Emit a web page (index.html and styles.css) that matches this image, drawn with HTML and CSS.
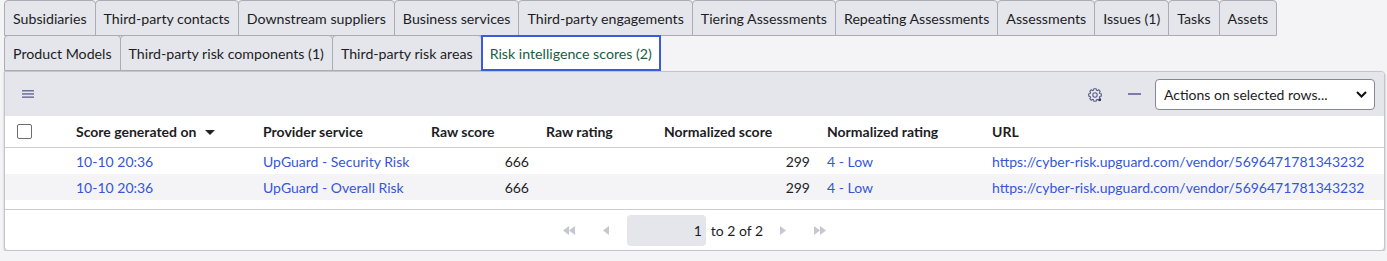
FILE: index.html
```html
<!DOCTYPE html>
<html>
<head>
<meta charset="utf-8">
<link rel="stylesheet" href="styles.css">
</head>
<body>
<div class="page">
  <div class="tabrow">
    <div class="tab">Subsidiaries</div>
    <div class="tab">Third-party contacts</div>
    <div class="tab">Downstream suppliers</div>
    <div class="tab">Business services</div>
    <div class="tab">Third-party engagements</div>
    <div class="tab">Tiering Assessments</div>
    <div class="tab">Repeating Assessments</div>
    <div class="tab">Assessments</div>
    <div class="tab">Issues (1)</div>
    <div class="tab">Tasks</div>
    <div class="tab">Assets</div>
  </div>
  <div class="tabrow">
    <div class="tab">Product Models</div>
    <div class="tab">Third-party risk components (1)</div>
    <div class="tab">Third-party risk areas</div>
    <div class="tab active">Risk intelligence scores (2)</div>
  </div>
  <div class="panel">
    <div class="toolbar">
      <svg class="hamb" width="12" height="8" viewBox="0 0 12 8"><rect x="0" y="0" width="12" height="1.5" fill="#6f7096"/><rect x="0" y="3.2" width="12" height="1.5" fill="#6f7096"/><rect x="0" y="6.4" width="12" height="1.5" fill="#6f7096"/></svg>
      <div class="spacer"></div>
      <svg class="gear" width="16" height="16" viewBox="0 0 16 16">
        <path d="M12.78 6.54 L14.30 6.89 L14.30 9.11 L12.78 9.46 L12.41 10.35 L13.24 11.67 L11.67 13.24 L10.35 12.41 L9.46 12.78 L9.11 14.30 L6.89 14.30 L6.54 12.78 L5.65 12.41 L4.33 13.24 L2.76 11.67 L3.59 10.35 L3.22 9.46 L1.70 9.11 L1.70 6.89 L3.22 6.54 L3.59 5.65 L2.76 4.33 L4.33 2.76 L5.65 3.59 L6.54 3.22 L6.89 1.70 L9.11 1.70 L9.46 3.22 L10.35 3.59 L11.67 2.76 L13.24 4.33 L12.41 5.65 Z" fill="none" stroke="#5d6088" stroke-width="1.1" stroke-linejoin="round"/>
        <circle cx="8" cy="8" r="2.2" fill="none" stroke="#5d6088" stroke-width="1.1"/>
        <circle cx="12.8" cy="12.8" r="1.4" fill="#2f3360"/>
      </svg>
      <span class="minus"></span>
      <div class="select"><span>Actions on selected rows...</span>
        <svg width="11" height="7" viewBox="0 0 11 7"><path d="M1 1 L5.5 5.5 L10 1" fill="none" stroke="#111" stroke-width="2"/></svg>
      </div>
    </div>
    <table class="grid">
      <colgroup>
        <col style="width:59px"><col style="width:187px"><col style="width:168px"><col style="width:115px"><col style="width:118px"><col style="width:163px"><col style="width:165px"><col>
      </colgroup>
      <thead>
        <tr>
          <th class="cb"><span class="checkbox"></span></th>
          <th>Score generated on <svg class="caret" width="10" height="5" viewBox="0 0 10 5"><path d="M0 0 H10 L5 5 Z" fill="#222"/></svg></th>
          <th>Provider service</th>
          <th>Raw score</th>
          <th>Raw rating</th>
          <th>Normalized score</th>
          <th>Normalized rating</th>
          <th>URL</th>
        </tr>
      </thead>
      <tbody>
        <tr>
          <td></td>
          <td><a>10-10 20:36</a></td>
          <td><a>UpGuard - Security Risk</a></td>
          <td class="num">666</td>
          <td></td>
          <td class="num">299</td>
          <td><a>4 - Low</a></td>
          <td><a>https://cyber-risk.upguard.com/vendor/5696471781343232</a></td>
        </tr>
        <tr class="alt">
          <td></td>
          <td><a>10-10 20:36</a></td>
          <td><a>UpGuard - Overall Risk</a></td>
          <td class="num">666</td>
          <td></td>
          <td class="num">299</td>
          <td><a>4 - Low</a></td>
          <td><a>https://cyber-risk.upguard.com/vendor/5696471781343232</a></td>
        </tr>
      </tbody>
    </table>
    <div class="gap"></div>
    <div class="pager">
      <svg class="pg first" width="12" height="9" viewBox="0 0 12 9"><path d="M6 0 V9 L0 4.5 Z M12 0 V9 L6 4.5 Z" fill="#c6c7d3"/></svg>
      <svg class="pg prev" width="6" height="9" viewBox="0 0 6 9"><path d="M6 0 V9 L0 4.5 Z" fill="#c6c7d3"/></svg>
      <div class="pageinput">1</div>
      <span class="of">to 2 of 2</span>
      <svg class="pg next" width="6" height="9" viewBox="0 0 6 9"><path d="M0 0 V9 L6 4.5 Z" fill="#c6c7d3"/></svg>
      <svg class="pg last" width="12" height="9" viewBox="0 0 12 9"><path d="M0 0 V9 L6 4.5 Z M6 0 V9 L12 4.5 Z" fill="#c6c7d3"/></svg>
    </div>
  </div>
</div>
</body>
</html>
```

FILE: styles.css
```css
html, body {
  margin: 0;
  padding: 0;
  background: #f4f4f6;
  font-family: Lato, "Liberation Sans", sans-serif;
  font-size: 14px;
  color: #1d1d1f;
}
.page {
  padding: 0 2px 0 4px;
}
.tabrow {
  display: flex;
  height: 35px;
}
.tabrow + .tabrow { height: 36px; }
.tab {
  box-sizing: border-box;
  height: 36px;
  padding: 0 8px;
  display: flex;
  align-items: center;
  background: #e4e6eb;
  border: 1px solid #a9acb4;
  border-radius: 4px 4px 0 0;
  margin-right: -1px;
  white-space: nowrap;
  color: #1d1d1f;
  font-size: 14.2px;
}
.tab.active {
  background: #fff;
  border: 2px solid #3a5bdb;
  border-radius: 0;
  color: #17603f;
  padding: 0 7px;
  position: relative;
  z-index: 1;
}
.panel {
  background: #fff;
  border: 1px solid #c3c5cc;
  border-radius: 0 4px 4px 4px;
  box-shadow: 0 1px 2px rgba(0,0,0,0.25);
  overflow: hidden;
}
.toolbar {
  height: 44px;
  background: #e4e6eb;
  display: flex;
  align-items: center;
  padding: 0 9px 0 17px;
}
.spacer { flex: 1; }
.gear { margin-right: 25px; margin-top: 1px; }
.minus {
  width: 13px;
  height: 1.5px;
  background: #7b7ea4;
  margin-right: 14px;
}
.select {
  box-sizing: border-box;
  width: 220px;
  height: 31px;
  background: #fff;
  border: 1px solid #85888f;
  border-radius: 4px;
  display: flex;
  align-items: center;
  justify-content: space-between;
  padding: 0 7px 0 8px;
  font-size: 14px;
}
.grid {
  width: 100%;
  border-collapse: collapse;
  table-layout: fixed;
}
.grid th {
  height: 31px;
  text-align: left;
  font-weight: 700;
  padding: 0 5px 0 12px;
  border-bottom: 1px solid #cbcdd3;
  white-space: nowrap;
  vertical-align: middle;
}
.grid th.cb { padding: 0 0 0 12px; }
.checkbox {
  display: block;
  width: 13px;
  height: 13px;
  border: 1px solid #6a6d75;
  border-radius: 2px;
  background: #fff;
}
.caret { margin-left: 5px; vertical-align: middle; position: relative; top: -1px; }
.grid td {
  height: 26px;
  padding: 0 5px 0 12px;
  white-space: nowrap;
  vertical-align: middle;
}
.grid tr.alt td { background: #f4f4f6; }
.grid td.num { text-align: right; }
.grid a { color: #3556d8; text-decoration: none; }
.gap {
  height: 9px;
  border-bottom: 1px solid #cbcdd3;
}
.pager {
  height: 40px;
  display: flex;
  align-items: center;
  justify-content: center;
}
.pg.first { margin-right: 28px; }
.pg.prev { margin-right: 18px; }
.pageinput {
  box-sizing: border-box;
  width: 79px;
  height: 31px;
  background: #e4e6eb;
  border-radius: 4px;
  display: flex;
  align-items: center;
  justify-content: flex-end;
  padding-right: 4px;
  margin-right: 5px;
}
.of { margin-right: 17px; }
.pg.next { margin-right: 28px; }
```
